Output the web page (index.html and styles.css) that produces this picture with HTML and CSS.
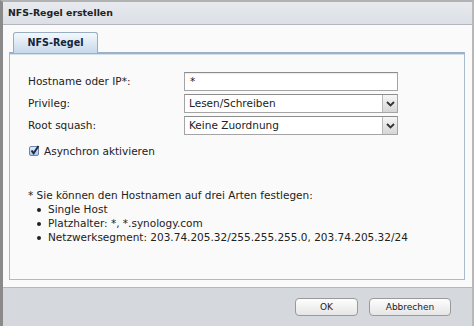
FILE: index.html
```html
<!DOCTYPE html>
<html lang="de">
<head>
<meta charset="utf-8">
<title>NFS-Regel erstellen</title>
<link rel="stylesheet" href="styles.css">
</head>
<body>
<div class="dialog">
  <div class="titlebar">NFS-Regel erstellen</div>
  <div class="body">
    <div class="tabs"><div class="tab">NFS-Regel</div></div>
    <div class="panel">
      <div class="form">
        <label class="label">Hostname oder IP*:</label>
        <div class="input">*</div>
        <label class="label">Privileg:</label>
        <div class="select"><span class="sel-text">Lesen/Schreiben</span><span class="sel-btn"><svg width="9" height="6" viewBox="0 0 9 6"><path d="M1 1 L4.5 4.5 L8 1" fill="none" stroke="#333" stroke-width="1.8"/></svg></span></div>
        <label class="label">Root squash:</label>
        <div class="select"><span class="sel-text">Keine Zuordnung</span><span class="sel-btn"><svg width="9" height="6" viewBox="0 0 9 6"><path d="M1 1 L4.5 4.5 L8 1" fill="none" stroke="#333" stroke-width="1.8"/></svg></span></div>
      </div>
      <div class="check">
        <svg class="cb" width="13" height="13" viewBox="0 0 13 13">
          <defs><linearGradient id="cbg" x1="0" y1="0" x2="0" y2="1"><stop offset="0" stop-color="#e4eefa"/><stop offset="1" stop-color="#a9c4e4"/></linearGradient></defs>
          <rect x="1.5" y="2.5" width="9" height="9" rx="1.5" fill="url(#cbg)" stroke="#6e86a8"/>
          <path d="M3.5 6.5 L5.6 9.2 L10.5 2" fill="none" stroke="#1d2d4e" stroke-width="2"/>
        </svg>
        <span>Asynchron aktivieren</span>
      </div>
      <div class="note">
        <p>* Sie können den Hostnamen auf drei Arten festlegen:</p>
        <ul>
          <li>Single Host</li>
          <li>Platzhalter: *, *.synology.com</li>
          <li>Netzwerksegment: 203.74.205.32/255.255.255.0, 203.74.205.32/24</li>
        </ul>
      </div>
    </div>
  </div>
  <div class="footer">
    <button class="btn ok">OK</button>
    <button class="btn cancel">Abbrechen</button>
  </div>
</div>
</body>
</html>
```

FILE: styles.css
```css
* { box-sizing: border-box; }
html, body { margin: 0; padding: 0; }
body {
  width: 474px;
  height: 326px;
  overflow: hidden;
  font-family: "DejaVu Sans", Verdana, sans-serif;
  font-size: 10.5px;
  color: #222;
  background: #fafafa;
}
.dialog {
  width: 474px;
  height: 326px;
  display: flex;
  flex-direction: column;
  border-left: 3px solid #8a8a8a;
  border-top: 2px solid #b2b2b2;
  border-right: 2px solid #b8b8b8;
  background: #fafafa;
}
.titlebar {
  height: 23px;
  line-height: 22px;
  padding-left: 5px;
  border-bottom: 1px solid #b3b7bc;
  background: linear-gradient(#e7eaef, #dce0e6);
  font-weight: bold;
  font-size: 9.4px;
  color: #222;
}
.body {
  flex: 1;
  display: flex;
  flex-direction: column;
  padding: 7px 7px 7px 6px;
}
.tabs {
  height: 20px;
  padding-left: 4px;
  display: flex;
  align-items: flex-end;
}
.tab {
  width: 85px;
  height: 21px;
  margin-bottom: -1px;
  border: 1px solid #98adc2;
  border-bottom: none;
  border-radius: 3px 3px 0 0;
  background: linear-gradient(#f4f8fc, #c6d9ea);
  text-align: center;
  font-weight: bold;
  font-size: 9.6px;
  line-height: 20px;
  color: #15243a;
  position: relative;
  z-index: 1;
}
.panel {
  flex: 1;
  border: 1px solid #a8bbcc;
  border-top: 2px solid #9cb1c5;
  box-shadow: inset 0 1px 0 #d4e0ea;
  background: #fafafa;
  padding: 18px 18px 0 18px;
}
.form {
  display: grid;
  grid-template-columns: 156px 214px;
  row-gap: 3px;
  grid-auto-rows: 19px;
}
.label {
  line-height: 19px;
  color: #222;
}
.input {
  border: 1px solid #a4a4a4;
  border-top-color: #8c8c8c;
  background: #fff;
  padding-left: 5px;
  line-height: 17px;
  box-shadow: inset 0 1px 1px rgba(0,0,0,0.08);
}
.select {
  display: flex;
  border: 1px solid #a4a4a4;
  border-top-color: #8c8c8c;
  background: #fff;
}
.sel-text {
  flex: 1;
  padding-left: 4px;
  line-height: 17px;
}
.sel-btn {
  width: 15px;
  border-left: 1px solid #b8b8b8;
  background: linear-gradient(#f6f6f6, #d6d6d6);
  display: flex;
  align-items: center;
  justify-content: center;
}
.check {
  display: flex;
  align-items: center;
  margin-top: 9px;
  height: 13px;
}
.cb { margin-left: 0; margin-right: 3px; }
.note {
  margin-top: 31px;
  line-height: 14px;
}
.note p { margin: 0; }
.note ul {
  margin: 0;
  padding: 0 0 0 20px;
  list-style: none;
}
.note li { position: relative; }
.note li::before {
  content: "";
  position: absolute;
  left: -11px;
  top: 6px;
  width: 4px;
  height: 4px;
  border-radius: 50%;
  background: #222;
}
.footer {
  height: 39px;
  border-top: 1px solid #b4b8bc;
  background: #d5d9dd;
  display: flex;
  justify-content: flex-end;
  align-items: flex-start;
  gap: 11px;
  padding: 10px 21px 0 0;
}
.btn {
  height: 18px;
  border: 1px solid #9a9a9a;
  border-radius: 4px;
  background: linear-gradient(#fdfdfd, #e6e6e6);
  font-family: "DejaVu Sans", Verdana, sans-serif;
  font-size: 9px;
  color: #222;
  padding: 0;
  line-height: 16px;
}
.ok { width: 63px; }
.cancel { width: 82px; }
```
